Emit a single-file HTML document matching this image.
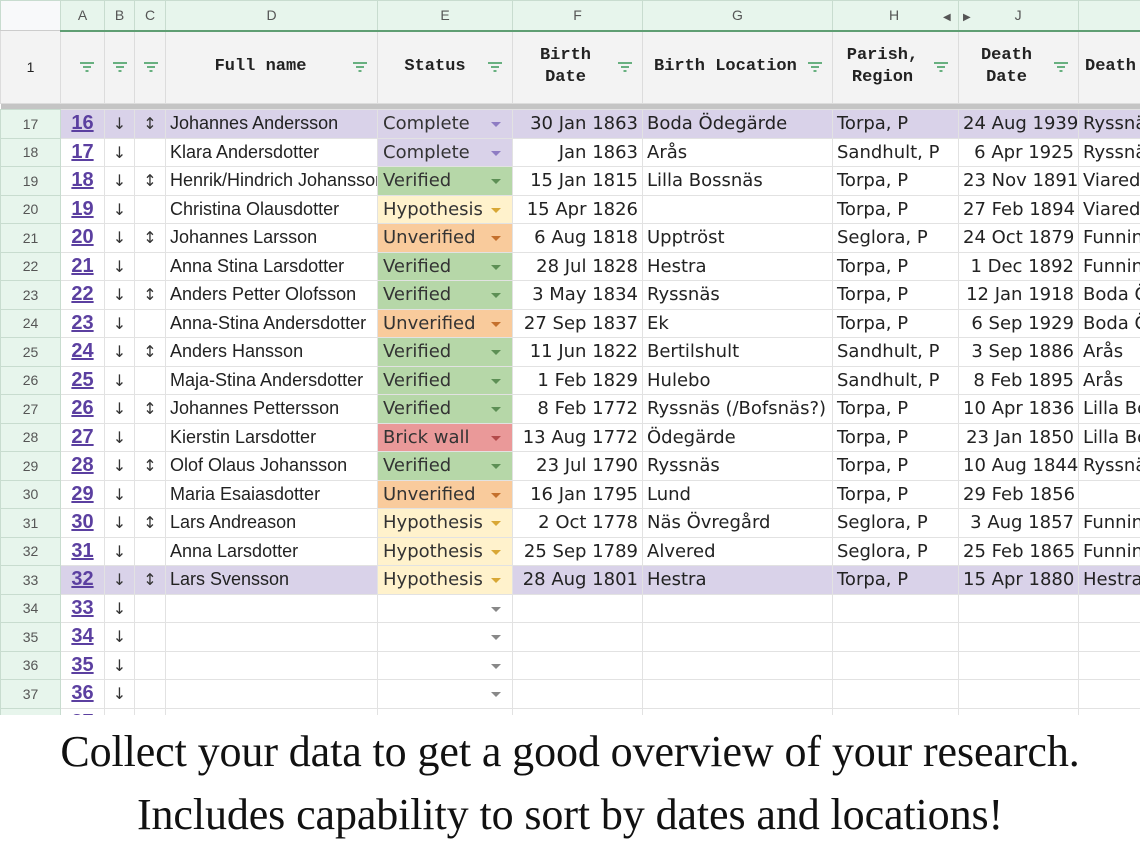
<!DOCTYPE html>
<html><head><meta charset="utf-8"><style>
*{margin:0;padding:0;box-sizing:border-box}
body{width:1140px;height:855px;overflow:hidden;background:#fff;position:relative;font-family:"DejaVu Sans",sans-serif}
.wrap{position:absolute;left:0;top:0;width:1140px;height:715px;overflow:hidden}
table{border-collapse:collapse;table-layout:fixed;width:1160px}
td{border:1px solid #e2e2e2;white-space:nowrap;overflow:hidden;height:28.5px;font-size:18px;color:#222;padding:0 4px;position:relative;vertical-align:middle}
tr.let td{height:30px;background:#e7f5ec;color:#555;font-family:"Liberation Sans",sans-serif;font-size:14px;text-align:center;border-color:#c8dccf;border-bottom:2px solid #5f9e73}
tr.let td.c0{background:#f8f9fa;border-bottom:1px solid #ccc}
tr.hd td{height:73px;background:#f3f3f3;font-family:"Liberation Mono",monospace;font-weight:bold;font-size:17px;color:#222;text-align:center;line-height:22px;border-color:#dcdcdc}
tr.sep td{height:6px;background:#c4c4c4;border:none;padding:0}
td.rn{background:#e7f5ec;color:#555;font-family:"Liberation Sans",sans-serif;font-size:14px;text-align:center;border-color:#c8dccf}
td.a{font-family:"Liberation Sans",sans-serif;font-weight:bold;color:#5b3fa0;text-decoration:underline;text-align:center;font-size:20px}
td.b,td.c{text-align:center;font-family:"DejaVu Sans",sans-serif;font-size:16px;color:#333}
td.d{font-family:"Liberation Sans",sans-serif;font-size:18px}
td.e{padding-left:5px;color:#333}
td.e:after{content:"";position:absolute;right:11px;top:12px;border-left:5px solid transparent;border-right:5px solid transparent;border-top:5px solid #888}
td.f{text-align:right;padding-right:4px}
.fi{position:absolute;right:10px;top:50%;margin-top:-5px}
.P{background:#d9d2e9!important}
.V{background:#b6d7a8}.V:after{border-top-color:#5d8f55!important}
.H{background:#fff2cc}.H:after{border-top-color:#d8a735!important}
.U{background:#f9cb9c}.U:after{border-top-color:#c4702d!important}
.B{background:#ea9999}.B:after{border-top-color:#b34b4b!important}
.C:after{border-top-color:#8e7cc3!important}
.cap{position:absolute;left:0;width:1140px;text-align:center;font-family:"Liberation Serif",serif;font-size:44px;color:#111;letter-spacing:-0.1px}
</style></head><body>
<div class="wrap">
<table>
<colgroup><col style="width:60px"><col style="width:44px"><col style="width:30px"><col style="width:31px"><col style="width:212px"><col style="width:135px"><col style="width:130px"><col style="width:190px"><col style="width:126px"><col style="width:120px"><col style="width:82px"></colgroup>
<tr class="let"><td class="c0"></td><td>A</td><td>B</td><td>C</td><td>D</td><td>E</td><td>F</td><td>G</td><td style="text-align:left;padding-left:56px">H <span style="font-size:10px;margin-left:40px">◀</span></td><td style="text-align:left;padding-left:4px"><span style="font-size:10px">▶</span> <span style="margin-left:40px">J</span></td><td></td></tr>
<tr class="hd"><td class="rn" style="font-family:'Liberation Sans';font-weight:normal;font-size:14px">1</td>
<td><svg class="fi" width="14" height="10"><path d="M0 1h14M3 5h8M5.5 9h3" stroke="#3a9a5b" stroke-width="1.6"/></svg></td>
<td><svg class="fi" style="right:7px" width="14" height="10"><path d="M0 1h14M3 5h8M5.5 9h3" stroke="#3a9a5b" stroke-width="1.6"/></svg></td>
<td><svg class="fi" style="right:7px" width="14" height="10"><path d="M0 1h14M3 5h8M5.5 9h3" stroke="#3a9a5b" stroke-width="1.6"/></svg></td>
<td style="padding-right:26px">Full name<svg class="fi" width="14" height="10"><path d="M0 1h14M3 5h8M5.5 9h3" stroke="#3a9a5b" stroke-width="1.6"/></svg></td>
<td style="padding-right:24px">Status<svg class="fi" width="14" height="10"><path d="M0 1h14M3 5h8M5.5 9h3" stroke="#3a9a5b" stroke-width="1.6"/></svg></td>
<td style="padding-right:28px">Birth<br>Date<svg class="fi" width="14" height="10"><path d="M0 1h14M3 5h8M5.5 9h3" stroke="#3a9a5b" stroke-width="1.6"/></svg></td>
<td style="text-align:left;padding-left:11px">Birth Location<svg class="fi" width="14" height="10"><path d="M0 1h14M3 5h8M5.5 9h3" stroke="#3a9a5b" stroke-width="1.6"/></svg></td>
<td style="padding-right:30px">Parish,<br>Region<svg class="fi" width="14" height="10"><path d="M0 1h14M3 5h8M5.5 9h3" stroke="#3a9a5b" stroke-width="1.6"/></svg></td>
<td style="padding-right:28px">Death<br>Date<svg class="fi" width="14" height="10"><path d="M0 1h14M3 5h8M5.5 9h3" stroke="#3a9a5b" stroke-width="1.6"/></svg></td>
<td style="text-align:left;padding-left:6px">Death</td></tr>
<tr class="sep"><td></td><td></td><td></td><td></td><td></td><td></td><td></td><td></td><td></td><td></td><td></td></tr>
<tr><td class="rn">17</td><td class="a P">16</td><td class="b P">↓</td><td class="c P">↕</td><td class="d P">Johannes Andersson</td><td class="e P C">Complete</td><td class="f P">30 Jan 1863</td><td class="P">Boda Ödegärde</td><td class="P">Torpa, P</td><td class="f P">24 Aug 1939</td><td class="P">Ryssnäs</td></tr>
<tr><td class="rn">18</td><td class="a">17</td><td class="b">↓</td><td class="c"></td><td class="d">Klara Andersdotter</td><td class="e P C">Complete</td><td class="f">Jan 1863</td><td>Arås</td><td>Sandhult, P</td><td class="f">6 Apr 1925</td><td>Ryssnäs</td></tr>
<tr><td class="rn">19</td><td class="a">18</td><td class="b">↓</td><td class="c">↕</td><td class="d">Henrik/Hindrich Johansson</td><td class="e V">Verified</td><td class="f">15 Jan 1815</td><td>Lilla Bossnäs</td><td>Torpa, P</td><td class="f">23 Nov 1891</td><td>Viared</td></tr>
<tr><td class="rn">20</td><td class="a">19</td><td class="b">↓</td><td class="c"></td><td class="d">Christina Olausdotter</td><td class="e H">Hypothesis</td><td class="f">15 Apr 1826</td><td></td><td>Torpa, P</td><td class="f">27 Feb 1894</td><td>Viared</td></tr>
<tr><td class="rn">21</td><td class="a">20</td><td class="b">↓</td><td class="c">↕</td><td class="d">Johannes Larsson</td><td class="e U">Unverified</td><td class="f">6 Aug 1818</td><td>Upptröst</td><td>Seglora, P</td><td class="f">24 Oct 1879</td><td>Funnina</td></tr>
<tr><td class="rn">22</td><td class="a">21</td><td class="b">↓</td><td class="c"></td><td class="d">Anna Stina Larsdotter</td><td class="e V">Verified</td><td class="f">28 Jul 1828</td><td>Hestra</td><td>Torpa, P</td><td class="f">1 Dec 1892</td><td>Funnina</td></tr>
<tr><td class="rn">23</td><td class="a">22</td><td class="b">↓</td><td class="c">↕</td><td class="d">Anders Petter Olofsson</td><td class="e V">Verified</td><td class="f">3 May 1834</td><td>Ryssnäs</td><td>Torpa, P</td><td class="f">12 Jan 1918</td><td>Boda Ö</td></tr>
<tr><td class="rn">24</td><td class="a">23</td><td class="b">↓</td><td class="c"></td><td class="d">Anna-Stina Andersdotter</td><td class="e U">Unverified</td><td class="f">27 Sep 1837</td><td>Ek</td><td>Torpa, P</td><td class="f">6 Sep 1929</td><td>Boda Ö</td></tr>
<tr><td class="rn">25</td><td class="a">24</td><td class="b">↓</td><td class="c">↕</td><td class="d">Anders Hansson</td><td class="e V">Verified</td><td class="f">11 Jun 1822</td><td>Bertilshult</td><td>Sandhult, P</td><td class="f">3 Sep 1886</td><td>Arås</td></tr>
<tr><td class="rn">26</td><td class="a">25</td><td class="b">↓</td><td class="c"></td><td class="d">Maja-Stina Andersdotter</td><td class="e V">Verified</td><td class="f">1 Feb 1829</td><td>Hulebo</td><td>Sandhult, P</td><td class="f">8 Feb 1895</td><td>Arås</td></tr>
<tr><td class="rn">27</td><td class="a">26</td><td class="b">↓</td><td class="c">↕</td><td class="d">Johannes Pettersson</td><td class="e V">Verified</td><td class="f">8 Feb 1772</td><td>Ryssnäs (/Bofsnäs?)</td><td>Torpa, P</td><td class="f">10 Apr 1836</td><td>Lilla Bo</td></tr>
<tr><td class="rn">28</td><td class="a">27</td><td class="b">↓</td><td class="c"></td><td class="d">Kierstin Larsdotter</td><td class="e B">Brick wall</td><td class="f">13 Aug 1772</td><td>Ödegärde</td><td>Torpa, P</td><td class="f">23 Jan 1850</td><td>Lilla Bo</td></tr>
<tr><td class="rn">29</td><td class="a">28</td><td class="b">↓</td><td class="c">↕</td><td class="d">Olof Olaus Johansson</td><td class="e V">Verified</td><td class="f">23 Jul 1790</td><td>Ryssnäs</td><td>Torpa, P</td><td class="f">10 Aug 1844</td><td>Ryssnäs</td></tr>
<tr><td class="rn">30</td><td class="a">29</td><td class="b">↓</td><td class="c"></td><td class="d">Maria Esaiasdotter</td><td class="e U">Unverified</td><td class="f">16 Jan 1795</td><td>Lund</td><td>Torpa, P</td><td class="f">29 Feb 1856</td><td></td></tr>
<tr><td class="rn">31</td><td class="a">30</td><td class="b">↓</td><td class="c">↕</td><td class="d">Lars Andreason</td><td class="e H">Hypothesis</td><td class="f">2 Oct 1778</td><td>Näs Övregård</td><td>Seglora, P</td><td class="f">3 Aug 1857</td><td>Funnina</td></tr>
<tr><td class="rn">32</td><td class="a">31</td><td class="b">↓</td><td class="c"></td><td class="d">Anna Larsdotter</td><td class="e H">Hypothesis</td><td class="f">25 Sep 1789</td><td>Alvered</td><td>Seglora, P</td><td class="f">25 Feb 1865</td><td>Funnina</td></tr>
<tr><td class="rn">33</td><td class="a P">32</td><td class="b P">↓</td><td class="c P">↕</td><td class="d P">Lars Svensson</td><td class="e H">Hypothesis</td><td class="f P">28 Aug 1801</td><td class="P">Hestra</td><td class="P">Torpa, P</td><td class="f P">15 Apr 1880</td><td class="P">Hestra</td></tr>
<tr><td class="rn">34</td><td class="a">33</td><td class="b">↓</td><td class="c"></td><td class="d"></td><td class="e"></td><td></td><td></td><td></td><td></td><td></td></tr>
<tr><td class="rn">35</td><td class="a">34</td><td class="b">↓</td><td class="c"></td><td class="d"></td><td class="e"></td><td></td><td></td><td></td><td></td><td></td></tr>
<tr><td class="rn">36</td><td class="a">35</td><td class="b">↓</td><td class="c"></td><td class="d"></td><td class="e"></td><td></td><td></td><td></td><td></td><td></td></tr>
<tr><td class="rn">37</td><td class="a">36</td><td class="b">↓</td><td class="c"></td><td class="d"></td><td class="e"></td><td></td><td></td><td></td><td></td><td></td></tr>
<tr><td class="rn">38</td><td class="a">37</td><td class="b">↓</td><td class="c"></td><td class="d"></td><td class="e"></td><td></td><td></td><td></td><td></td><td></td></tr>
</table>
</div>
<div class="cap" style="top:726px">Collect your data to get a good overview of your research.</div>
<div class="cap" style="top:789px">Includes capability to sort by dates and locations!</div>
</body></html>
